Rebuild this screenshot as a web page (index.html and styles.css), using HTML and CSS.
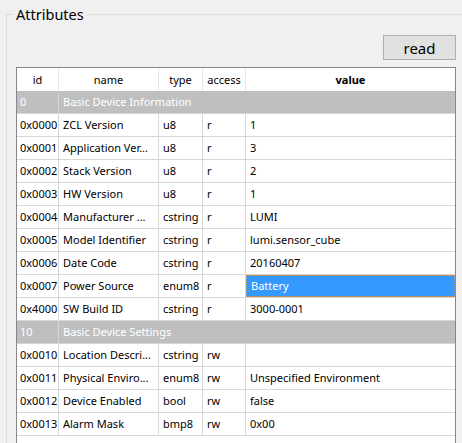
FILE: index.html
```html
<!DOCTYPE html>
<html lang="en">
<head>
    <meta charset="UTF-8">
    <meta name="viewport" content="width=device-width, initial-scale=1.0">
    <title>Attributes</title>
    <link rel="stylesheet" href="styles.css">
</head>
<body>
    <fieldset class="group">
        <legend>Attributes</legend>
        <div class="panel">
            <div class="toolbar">
                <button type="button" class="btn">read</button>
            </div>
            <div class="grid">
                <div class="row head">
                    <div>id</div><div>name</div><div>type</div><div>access</div><div class="bold">value</div>
                </div>

                <div class="row sec">
                    <div>0</div><div class="span">Basic Device Information</div>
                </div>
                <div class="row"><div>0x0000</div><div>ZCL Version</div><div>u8</div><div>r</div><div>1</div></div>
                <div class="row"><div>0x0001</div><div>Application Ver...</div><div>u8</div><div>r</div><div>3</div></div>
                <div class="row"><div>0x0002</div><div>Stack Version</div><div>u8</div><div>r</div><div>2</div></div>
                <div class="row"><div>0x0003</div><div>HW Version</div><div>u8</div><div>r</div><div>1</div></div>
                <div class="row"><div>0x0004</div><div>Manufacturer ...</div><div>cstring</div><div>r</div><div>LUMI</div></div>
                <div class="row"><div>0x0005</div><div>Model Identifier</div><div>cstring</div><div>r</div><div>lumi.sensor_cube</div></div>
                <div class="row"><div>0x0006</div><div>Date Code</div><div>cstring</div><div>r</div><div>20160407</div></div>
                <div class="row"><div>0x0007</div><div>Power Source</div><div>enum8</div><div>r</div><div><span class="sel">Battery</span></div></div>
                <div class="row"><div>0x4000</div><div>SW Build ID</div><div>cstring</div><div>r</div><div>3000-0001</div></div>

                <div class="row sec">
                    <div>10</div><div class="span">Basic Device Settings</div>
                </div>
                <div class="row"><div>0x0010</div><div>Location Descri...</div><div>cstring</div><div>rw</div><div></div></div>
                <div class="row"><div>0x0011</div><div>Physical Enviro...</div><div>enum8</div><div>rw</div><div>Unspecified Environment</div></div>
                <div class="row"><div>0x0012</div><div>Device Enabled</div><div>bool</div><div>rw</div><div>false</div></div>
                <div class="row"><div>0x0013</div><div>Alarm Mask</div><div>bmp8</div><div>rw</div><div>0x00</div></div>
            </div>
        </div>
    </fieldset>
</body>
</html>
```

FILE: styles.css
```css
html, body{
    margin: 0;
    width: 462px;
    height: 443px;
    overflow: hidden;
    background-color: #f0f0f0;
    font-family: "Noto Sans", "Open Sans", sans-serif;
    font-size: 11px;
    color: #000;
}
.group{
    margin: 4px 0 0 6px;
    padding: 0 0 0 6px;
    width: 456px;
    height: 439px;
    border: 1px solid #dcdcdc;
    border-right: none;
    border-bottom: none;
    box-sizing: border-box;
}
.group legend{
    padding: 0 3px;
    font-size: 14.5px;
    line-height: 20px;
}
.panel{
    width: 440px;
    margin-left: 3px;
}
.toolbar{
    display: flex;
    justify-content: flex-end;
    margin-top: 11px;
    margin-bottom: 7px;
}
.btn{
    width: 73px;
    height: 25px;
    padding: 0;
    margin: 0;
    font-family: inherit;
    font-size: 15px;
    line-height: 22px;
    color: #000;
    background-color: #e1e1e1;
    border: 1px solid #adadad;
}
.grid{
    display: grid;
    grid-template-columns: 42px 100px 44px 43px 209px;
    grid-auto-rows: 23px;
    background-color: #fff;
    border: 1px solid #828790;
    border-bottom: none;
    height: 376px;
    box-sizing: border-box;
    align-content: start;
    overflow: hidden;
}
.row{
    display: contents;
}
.row > div{
    box-sizing: border-box;
    line-height: 22px;
    white-space: nowrap;
    overflow: hidden;
    padding-left: 4px;
    border-right: 1px solid #d8d8d8;
    border-bottom: 1px solid #d8d8d8;
}
.row > div:first-child{
    padding-left: 3px;
}
.row > div:last-child{
    border-right: none;
}
.head > div{
    line-height: 23px;
    padding-left: 0 !important;
    text-align: center;
    border-bottom: none;
    border-right-color: #e5e5e5;
}
.bold{
    font-weight: bold;
}
.sec > div{
    background-color: #bfbfbf;
    color: #fff;
    border-color: #d6d6d6;
}
.span{
    grid-column: 2 / -1;
}
.sel{
    display: block;
    margin-left: -4px;
    padding-left: 4px;
    height: 22px;
    line-height: 20px;
    color: #fff;
    background-color: #3399ff;
    border: 1px dotted #c89a68;
    box-sizing: border-box;
}
```
